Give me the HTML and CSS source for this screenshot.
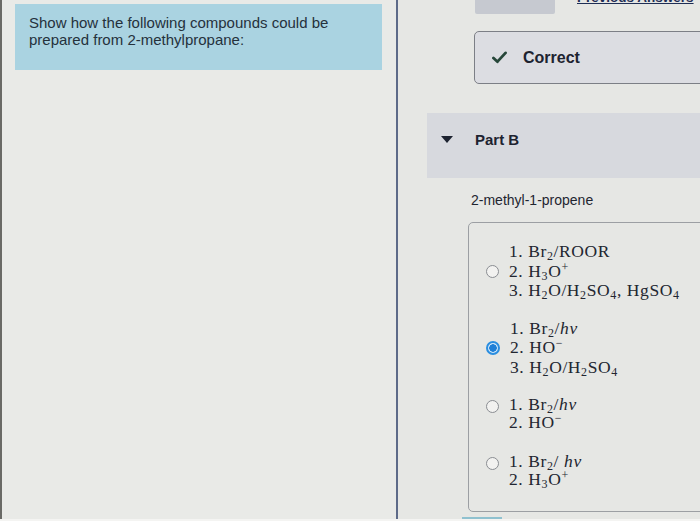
FILE: index.html
```html
<!DOCTYPE html>
<html>
<head>
<meta charset="utf-8">
<link rel="stylesheet" href="styles.css">
</head>
<body>
<div class="page">
  <div class="left">
    <div class="prompt">Show how the following compounds could be prepared from 2-methylpropane:</div>
  </div>
  <div class="right">
    <div class="toolbar">
      <span class="submit">Submit</span>
      <a class="prev">Previous Answers</a>
    </div>
    <div class="correct">
      <svg class="check" viewBox="0 0 16 14" width="15" height="13"><path d="M1.5 7.5 L5.8 11.5 L14.5 2" fill="none" stroke="#27473a" stroke-width="3" stroke-linecap="round" stroke-linejoin="round"/></svg>
      <span>Correct</span>
    </div>
    <div class="part">
      <span class="tri"></span>
      <span class="part-title">Part B</span>
    </div>
    <div class="compound">2-methyl-1-propene</div>
    <div class="answers">
      <div class="opt">
        <span class="radio"></span>
        <div class="m">
          <div>1. Br<sub>2</sub>/ROOR</div>
          <div>2. H<sub>3</sub>O<sup>+</sup></div>
          <div>3. H<sub>2</sub>O/H<sub>2</sub>SO<sub>4</sub>, HgSO<sub>4</sub></div>
        </div>
      </div>
      <div class="opt">
        <span class="radio on"></span>
        <div class="m">
          <div>1. Br<sub>2</sub>/<i>hν</i></div>
          <div>2. HO<sup>−</sup></div>
          <div>3. H<sub>2</sub>O/H<sub>2</sub>SO<sub>4</sub></div>
        </div>
      </div>
      <div class="opt short">
        <span class="radio"></span>
        <div class="m">
          <div>1. Br<sub>2</sub>/<i>hν</i></div>
          <div>2. HO<sup>−</sup></div>
        </div>
      </div>
      <div class="opt short">
        <span class="radio"></span>
        <div class="m">
          <div>1. Br<sub>2</sub>/ <i>hν</i></div>
          <div>2. H<sub>3</sub>O<sup>+</sup></div>
        </div>
      </div>
    </div>
    <div class="bottom-line"></div>
  </div>
</div>
</body>
</html>
```

FILE: styles.css
```css
html, body {
  margin: 0;
  padding: 0;
}
body {
  width: 700px;
  height: 521px;
  overflow: hidden;
  background: #e7e8e5;
  font-family: "Liberation Sans", Arial, sans-serif;
  color: #1f2530;
}
.page {
  display: flex;
  height: 519px;
  border-bottom: 2px solid #f4f4f2;
}
.left {
  flex: none;
  width: 398px;
  box-sizing: border-box;
  border-left: 2px solid #6a6a66;
  border-right: 2px solid #5d6a88;
  background: #e9eae7;
}
.prompt {
  margin: 4px 14px 0 13px;
  height: 66px;
  box-sizing: border-box;
  background: #aad3e1;
  padding: 10px 14px 0 14px;
  font-size: 15px;
  line-height: 17px;
  color: #25313c;
}
.right {
  flex: 1;
  display: flex;
  flex-direction: column;
  background: #e6e7e4;
}
.toolbar {
  display: flex;
  align-items: flex-end;
  height: 14px;
  padding-left: 77px;
  overflow: hidden;
  white-space: nowrap;
}
.submit {
  width: 80px;
  height: 30px;
  background: #c6c9d0;
  color: #9aa0aa;
  font-weight: bold;
  font-size: 14px;
  text-align: center;
  line-height: 22px;
  border-radius: 2px;
}
.prev {
  margin-left: 22px;
  font-weight: bold;
  font-size: 13.5px;
  color: #1e2e55;
  text-decoration: underline;
  line-height: 15px;
  margin-bottom: 9px;
  flex: none;
}
.correct {
  margin: 17px -6px 0 76px;
  height: 53px;
  box-sizing: border-box;
  border: 1px solid #7c7f86;
  border-radius: 5px;
  background: #dcdde2;
  display: flex;
  align-items: center;
  padding-left: 17px;
  font-weight: bold;
  font-size: 16px;
  color: #1d2330;
}
.check {
  margin-right: 16px;
}
.part {
  margin: 29px 0 0 29px;
  height: 65px;
  box-sizing: border-box;
  background: #d7d9de;
  display: flex;
  align-items: flex-start;
  padding: 18px 0 0 14px;
}
.tri {
  width: 0;
  height: 0;
  border-left: 6px solid transparent;
  border-right: 6px solid transparent;
  border-top: 7px solid #1d2330;
  margin: 5px 22px 0 0;
}
.part-title {
  font-weight: bold;
  font-size: 15px;
  line-height: 17px;
  color: #1d2330;
}
.compound {
  margin: 13px 0 0 73px;
  font-size: 14px;
  line-height: 18px;
  color: #1f2530;
}
.answers {
  margin: 13px -6px 0 70px;
  height: 290px;
  box-sizing: border-box;
  border: 1px solid #9c9fa3;
  border-radius: 5px;
  padding: 19px 0 0 17px;
}
.opt {
  display: flex;
  align-items: center;
  margin-bottom: 18px;
}
.opt.short {
  align-items: flex-start;
  margin-bottom: 21px;
}
.opt.short .m {
  line-height: 18px;
}
.opt.short .radio {
  margin-top: 5px;
}
.radio {
  width: 11px;
  height: 11px;
  border: 1.5px solid #8a8d92;
  border-radius: 50%;
  background: #f2f2f0;
  margin-right: 10px;
  flex: none;
}
.radio.on {
  border: 2px solid #2a8ee0;
  background: radial-gradient(circle, #1f7fd6 0 3.5px, #cfe6f8 4px);
  width: 10px;
  height: 10px;
}
.m {
  font-family: "Liberation Serif", "DejaVu Serif", serif;
  font-size: 17.5px;
  letter-spacing: 0.6px;
  line-height: 19.5px;
  color: #222630;
}
.m sub, .m sup {
  font-size: 12px;
  line-height: 0;
}
.m sub {
  vertical-align: -3px;
}
.m sup {
  vertical-align: 6px;
}
.m i {
  font-style: italic;
}
.bottom-line {
  margin: auto 0 0 64px;
  width: 40px;
  height: 2px;
  background: #8fc1cf;
}
```
